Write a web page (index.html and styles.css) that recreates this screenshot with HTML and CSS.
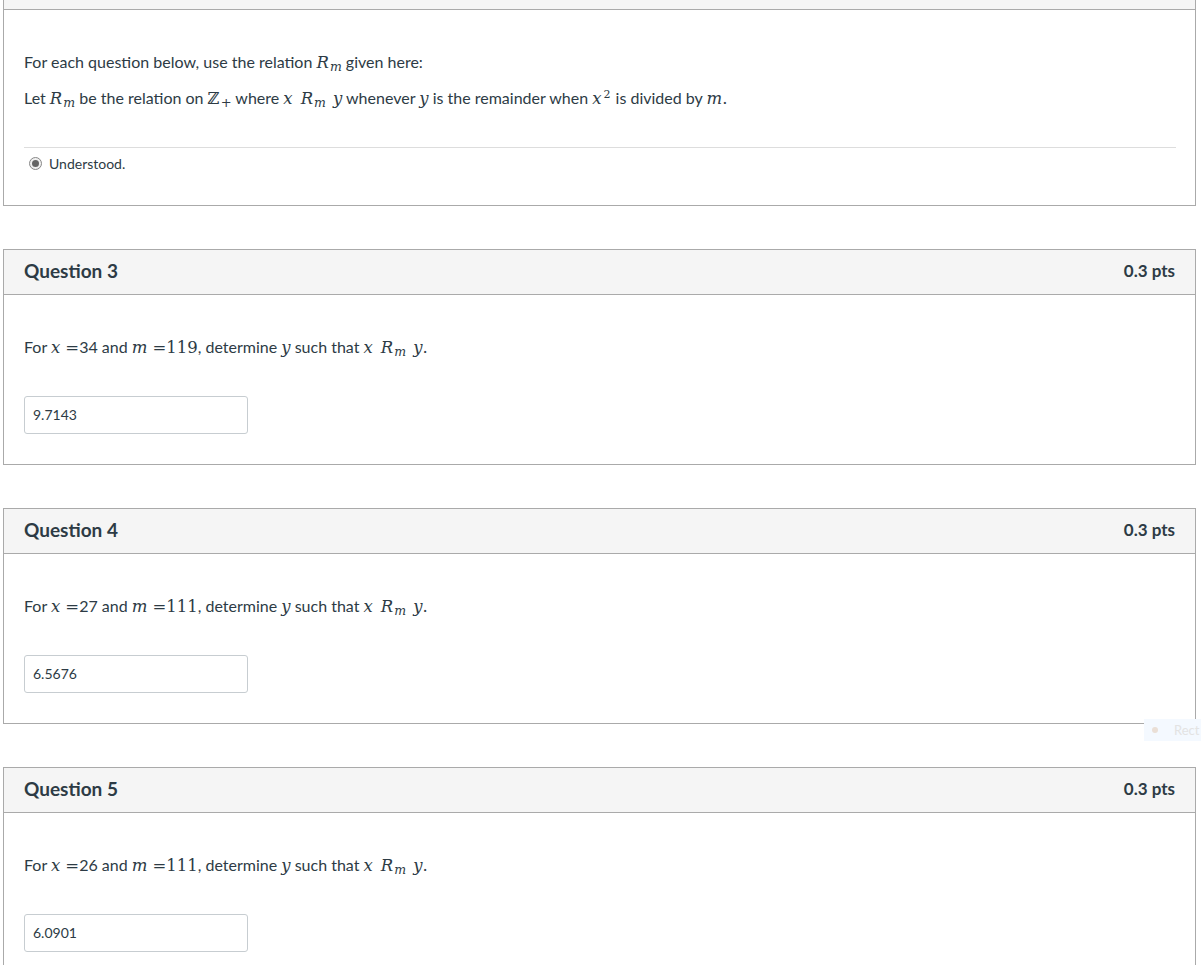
FILE: index.html
```html
<!DOCTYPE html>
<html>
<head>
<meta charset="utf-8">
<link rel="stylesheet" href="styles.css">
</head>
<body>
<div class="page">
  <div class="card">
    <div class="stub"></div>
    <div class="body">
      <p class="line">For each question below, use the relation <span class="m"><i>R</i><sub>m</sub></span> given here:</p>
      <p class="line second">Let <span class="m"><i>R</i><sub>m</sub></span> be the relation on <span class="m">ℤ<sub class="up">+</sub></span> where <span class="m"><i>x</i><span class="rel"><i>R</i><sub>m</sub></span><i>y</i></span> whenever <span class="m"><i>y</i></span> is the remainder when <span class="m"><i>x</i><sup>2</sup></span> is divided by <span class="m"><i>m</i>.</span></p>
      <hr class="sep">
      <div class="answer"><span class="radio"><span class="dot"></span></span><span class="label">Understood.</span></div>
    </div>
  </div>

  <div class="card">
    <div class="head"><span class="title">Question 3</span><span class="pts">0.3 pts</span></div>
    <div class="body qbody">
      <p class="line">For <span class="m"><i>x</i><span class="eq">=</span></span>34 and <span class="m"><i>m</i><span class="eq">=</span>119</span>, determine <span class="m"><i>y</i></span> such that <span class="m"><i>x</i><span class="rel"><i>R</i><sub>m</sub></span><i>y</i>.</span></p>
      <div class="input">9.7143</div>
    </div>
  </div>

  <div class="card">
    <div class="head"><span class="title">Question 4</span><span class="pts">0.3 pts</span></div>
    <div class="body qbody">
      <p class="line">For <span class="m"><i>x</i><span class="eq">=</span></span>27 and <span class="m"><i>m</i><span class="eq">=</span>111</span>, determine <span class="m"><i>y</i></span> such that <span class="m"><i>x</i><span class="rel"><i>R</i><sub>m</sub></span><i>y</i>.</span></p>
      <div class="input">6.5676</div>
    </div>
  </div>

  <div class="card">
    <div class="head"><span class="title">Question 5</span><span class="pts">0.3 pts</span></div>
    <div class="body qbody">
      <p class="line">For <span class="m"><i>x</i><span class="eq">=</span></span>26 and <span class="m"><i>m</i><span class="eq">=</span>111</span>, determine <span class="m"><i>y</i></span> such that <span class="m"><i>x</i><span class="rel"><i>R</i><sub>m</sub></span><i>y</i>.</span></p>
      <div class="input">6.0901</div>
    </div>
  </div>
</div>
<div class="badge"><span class="bdot"></span><span class="btext">Rect</span></div>
</body>
</html>
```

FILE: styles.css
```css
html, body {
  margin: 0;
  padding: 0;
  background: #fff;
}
body {
  font-family: Lato, "Noto Sans", sans-serif;
  color: #2d3b45;
  position: relative;
  overflow: hidden;
  height: 965px;
}
.page {
  padding-left: 3px;
  width: 1193px;
}
.card {
  border: 1px solid #aaaaaa;
  border-top: none;
  margin-bottom: 43px;
  background: #fff;
}
.card + .card {
  border-top: 1px solid #aaaaaa;
}
.stub {
  height: 9px;
  background: #f5f5f5;
  border-bottom: 1px solid #aaaaaa;
}
.head {
  background: #f5f5f5;
  border-bottom: 1px solid #aaaaaa;
  display: flex;
  align-items: center;
  justify-content: space-between;
  padding: 0 20px 3px 20px;
  box-sizing: border-box;
  height: 45px;
}
.title {
  font-weight: 700;
  font-size: 19px;
  color: #2d3b45;
}
.pts {
  font-weight: 700;
  font-size: 17px;
  color: #2d3b45;
}
.body {
  padding: 41px 19px 31px 20px;
  height: 123px;
}
.qbody {
  padding-bottom: 30px;
  height: 98px;
}
.line {
  margin: 0;
  height: 22px;
  line-height: 22px;
  font-size: 16px;
  white-space: nowrap;
}
.second {
  margin-top: 14px;
}
.m {
  font-family: "DejaVu Serif", "Liberation Serif", serif;
  font-size: 16.5px;
  line-height: 0;
}
.m i {
  font-style: italic;
}
.m sub {
  font-style: italic;
  font-size: 12.5px;
  line-height: 0;
  vertical-align: -3px;
  margin-left: 1px;
}
.m sub.up {
  font-style: normal;
  font-size: 13px;
}
.m sup {
  font-size: 11px;
  line-height: 0;
  vertical-align: 6px;
  margin: 0 1px 0 2px;
}
.eq {
  margin-left: 5px;
}
.rel {
  margin: 0 7px 0 8px;
}
.sep {
  margin: 38px 0 5px;
  border: none;
  border-top: 1px solid #dddddd;
  height: 0;
}
.answer {
  display: flex;
  align-items: center;
  height: 20px;
  margin-bottom: 1px;
}
.radio {
  width: 11px;
  height: 11px;
  border: 1px solid #888;
  border-radius: 50%;
  margin-left: 5px;
  margin-right: 7px;
  display: flex;
  align-items: center;
  justify-content: center;
  background: #f0f0f0;
}
.dot {
  width: 7px;
  height: 7px;
  border-radius: 50%;
  background: #666;
}
.label {
  font-size: 14px;
}
.input {
  margin-top: 38px;
  width: 206px;
  border: 1px solid #c7cdd1;
  border-radius: 3px;
  padding: 0 8px 1px;
  box-sizing: content-box;
  display: flex;
  align-items: center;
  font-size: 14px;
  color: #2d3b45;
  height: 35px;
}
.badge {
  position: absolute;
  left: 1144px;
  top: 719px;
  width: 57px;
  height: 22px;
  background: #f4f9ff;
  display: flex;
  align-items: center;
}
.bdot {
  width: 6px;
  height: 6px;
  border-radius: 50%;
  background: #eadfd6;
  margin-left: 8px;
  margin-right: 16px;
}
.btext {
  font-size: 13px;
  color: #e3e3e3;
}
```
